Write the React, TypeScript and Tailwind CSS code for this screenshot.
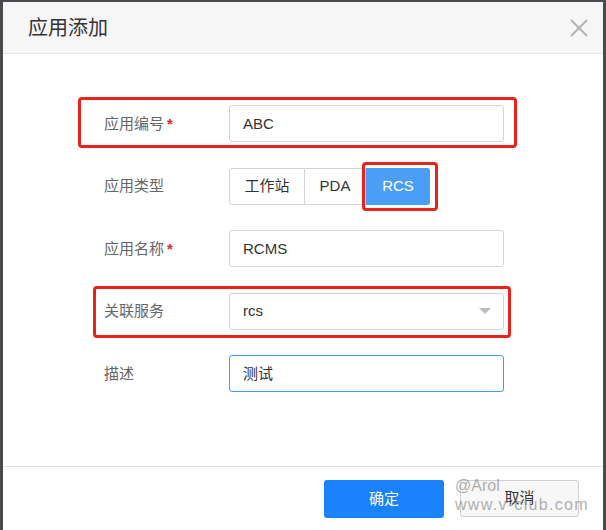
import React from "react";

const font = { fontFamily: '"Liberation Sans", "Noto Sans CJK SC", sans-serif' };

function Row({ label, required, children, box }: { label: string; required?: boolean; children: React.ReactNode; box?: string }) {
  return (
    <div className="relative flex items-center h-[37px]">
      {box && <div className={`absolute border-[3px] border-[#e8231e] rounded-[4px] pointer-events-none ${box}`} />}
      <div className="w-[125px] text-[15px] text-[#666] flex items-center pt-[1px]">
        <span>{label}</span>
        {required && <span className="text-[#e0262a] ml-[3px] text-[15px] font-bold">*</span>}
      </div>
      {children}
    </div>
  );
}

export default function App() {
  return (
    <div className="w-[606px] h-[530px] bg-[#4a4a4e] overflow-hidden" style={font}>
      <div className="ml-[3px] mt-[2px] w-[600px] h-[540px] bg-white rounded-tl-[3px] flex flex-col relative">
        <div className="h-[52px] bg-[#f6f6f7] border-b border-[#e3e3e3] flex items-center justify-between pl-[25px] pr-[14px] shrink-0">
          <span className="text-[20px] text-[#333] pt-[1px]">应用添加</span>
          <svg width="20" height="20" viewBox="0 0 20 20" className="mt-[1px]">
            <path d="M2 2 L18 18 M18 2 L2 18" stroke="#b3b3b3" strokeWidth="2" />
          </svg>
        </div>
        <div className="h-[413px] pl-[101px] pt-[51px] flex flex-col gap-[25.5px] border-b border-[#e3e3e3] shrink-0">
          <Row label="应用编号" required box="-left-[26px] -top-[8px] w-[439px] h-[51px]">
            <div className="w-[275px] h-[37px] border border-[#d4d4d4] rounded-[3px] flex items-center px-[13px] pt-[1px] text-[15px] text-[#333]">ABC</div>
          </Row>
          <Row label="应用类型">
            <div className="relative flex h-[37px] text-[15px]">
              <div className="w-[76px] border border-[#d4d4d4] rounded-l-[3px] flex items-center justify-center text-[#333]">工作站</div>
              <div className="w-[61px] border-y border-r border-[#d4d4d4] flex items-center justify-center text-[#333]">PDA</div>
              <div className="w-[64px] bg-[#4a9ff5] rounded-r-[3px] flex items-center justify-center text-white">RCS</div>
              <div className="absolute left-[133px] -top-[6px] w-[76px] h-[49px] border-[3px] border-[#e8231e] rounded-[4px]" />
            </div>
          </Row>
          <Row label="应用名称" required>
            <div className="w-[275px] h-[37px] border border-[#d4d4d4] rounded-[3px] flex items-center px-[13px] pt-[1px] text-[15px] text-[#333]">RCMS</div>
          </Row>
          <Row label="关联服务" box="-left-[11px] -top-[7px] w-[418px] h-[52px]">
            <div className="w-[275px] h-[37px] border border-[#d4d4d4] rounded-[3px] flex items-center justify-between pl-[13px] pr-[12px] pt-[1px] text-[15px] text-[#333]">
              <span>rcs</span>
              <svg width="12" height="7" viewBox="0 0 12 7"><path d="M0 0 L12 0 L6 6 Z" fill="#bcbcbc" /></svg>
            </div>
          </Row>
          <Row label="描述">
            <div className="w-[275px] h-[37px] border border-[#409eff] rounded-[3px] flex items-center px-[13px] pt-[1px] text-[15px] text-[#333]">测试</div>
          </Row>
        </div>
        <div className="flex justify-end gap-[16px] pt-[13px] pr-[24px]">
          <div className="w-[120px] h-[38px] bg-[#1a82fb] rounded-[3px] text-white text-[15px] flex items-center justify-center">确定</div>
          <div className="w-[119px] h-[37px] bg-[#f7f7f7] border border-[#d0d0d0] rounded-[3px] text-[#333] text-[15px] flex items-center justify-center">取消</div>
        </div>
        <div className="absolute left-[452px] top-[474px] text-[16px] leading-[19px] text-[#9a9a9a]/80 pointer-events-none">
          <div>@Arol</div>
          <div className="tracking-[1.3px]">www.v-club.com</div>
        </div>
      </div>
    </div>
  );
}
